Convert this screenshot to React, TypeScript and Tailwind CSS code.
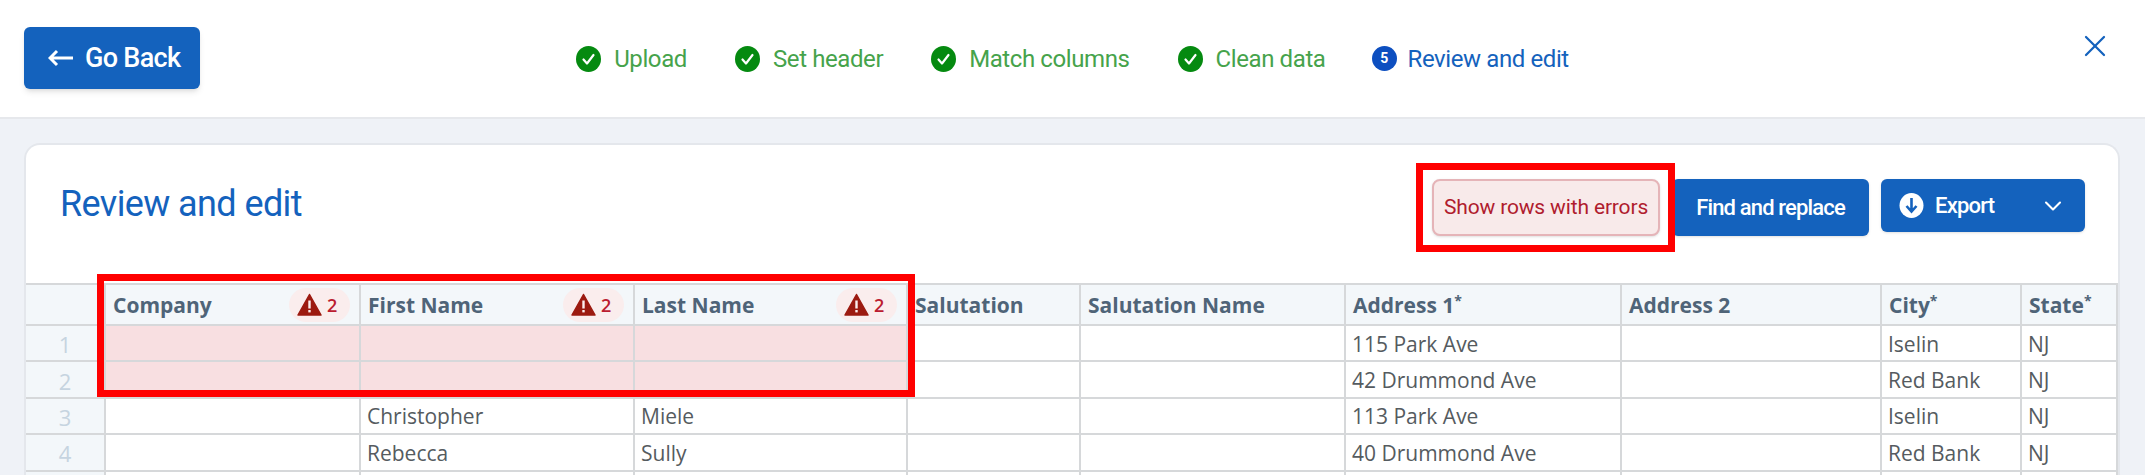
import { X, ChevronDown } from 'lucide-react'

const steps = ['Upload', 'Set header', 'Match columns', 'Clean data']

const columns = [
  { name: 'Company', errors: true, width: 'w-[255px]' },
  { name: 'First Name', errors: true, width: 'w-[274px]' },
  { name: 'Last Name', errors: true, width: 'w-[273px]' },
  { name: 'Salutation', width: 'w-[173px]' },
  { name: 'Salutation Name', width: 'w-[265px]' },
  { name: 'Address 1', required: true, width: 'w-[276px]' },
  { name: 'Address 2', width: 'w-[260px]' },
  { name: 'City', required: true, width: 'w-[140px]' },
  { name: 'State', required: true, width: 'w-[96px]' },
]

const rows = [
  ['', '', '', '', '', '115 Park Ave', '', 'Iselin', 'NJ'],
  ['', '', '', '', '', '42 Drummond Ave', '', 'Red Bank', 'NJ'],
  ['', 'Christopher', 'Miele', '', '', '113 Park Ave', '', 'Iselin', 'NJ'],
  ['', 'Rebecca', 'Sully', '', '', '40 Drummond Ave', '', 'Red Bank', 'NJ'],
  ['', '', '', '', '', '', '', '', ''],
]

const CheckIcon = () => (
  <svg className="h-[26px] w-[25px] shrink-0" viewBox="0 0 25 26">
    <ellipse cx="12.5" cy="13" rx="12.5" ry="13" fill="#058a10" />
    <path d="M7.5 13.5l3.5 4 6.5-8.5" fill="none" stroke="#fff" strokeWidth="2.2" strokeLinecap="round" strokeLinejoin="round" />
  </svg>
)

const ErrorBadge = () => (
  <span className="flex h-[34px] w-[61px] shrink-0 items-center gap-[5px] rounded-full bg-[#faeded] pl-[8px]">
    <svg className="h-[23px] w-[25px]" viewBox="0 0 25 23">
      <path d="M12.5 1.5L24 22H1z" fill="#9c1a10" stroke="#9c1a10" strokeWidth="1.5" strokeLinejoin="round" />
      <rect x="11.3" y="7.5" width="2.4" height="8" fill="#fbeeee" />
      <rect x="11.3" y="17" width="2.4" height="2.4" fill="#fbeeee" />
    </svg>
    <span className="text-[18px] leading-none font-semibold text-[#bb1c30]">2</span>
  </span>
)

export default function App() {
  return (
    <div className="h-[475px] w-[2145px] overflow-hidden bg-[#eff2f7] font-['Roboto',sans-serif]">
      <header className="grid h-[119px] grid-cols-[1fr_auto_1fr] items-center border-b-2 border-[#e6e8ec] bg-white">
        <div className="pb-[2px] pl-6">
          <button type="button" className="flex h-[62px] w-[176px] items-center gap-[12px] rounded-[6px] bg-[#1462bd] pl-[24px] text-[27px] font-medium tracking-[-0.7px] text-white shadow-md">
            <svg className="h-[18px] w-[25px]" viewBox="0 0 25 18">
              <path d="M9 2L2 9l7 7M2 9h23" fill="none" stroke="#fff" strokeWidth="3" />
            </svg>
            <span className="pt-[2px]">Go Back</span>
          </button>
        </div>
        <ol className="flex items-center gap-[48px]">
          {steps.map((step) => (
            <li key={step} className="flex items-center gap-[13px] text-[24px] tracking-[-0.4px] text-[#46a34b]">
              <CheckIcon />
              {step}
            </li>
          ))}
          <li className="ml-[-2px] flex items-center gap-[11px] text-[24px] tracking-[-0.4px] text-[#1462bd]">
            <span className="flex h-[25px] w-[25px] items-center justify-center rounded-full bg-[#0d4fc0] text-[14px] font-bold text-white">5</span>
            Review and edit
          </li>
        </ol>
        <button type="button" className="mt-[28px] mr-[32px] self-start justify-self-end text-[#1462bd]">
          <X size={36} strokeWidth={1.5} />
        </button>
      </header>

      <main className="pt-[24px] pr-[25px] pl-6">
        <section className="relative rounded-t-[16px] border-x-2 border-t-2 border-[#e4e7ec] bg-white">
          <div className="flex h-[138px] items-start pt-[34px] pr-[33px] pl-[34px]">
            <h1 className="mt-[1px] text-[36px] leading-[48px] tracking-[-0.6px] text-[#1462bd]">Review and edit</h1>
            <div className="ml-auto flex items-start gap-3">
              <button type="button" className="flex h-[57px] w-[228px] items-center justify-center rounded-[8px] border-2 border-[#e5b4b8] bg-[#f8eaea] text-[21px] tracking-[-0.15px] text-[#b01c2e] shadow-sm">
                Show rows with errors
              </button>
              <button type="button" className="flex h-[57px] w-[197px] items-center justify-center rounded-[6px] bg-[#1462bd] text-[22px] font-medium tracking-[-0.85px] text-white shadow-sm">
                Find and replace
              </button>
              <button type="button" className="flex h-[53px] w-[204px] items-center rounded-[6px] bg-[#1462bd] pr-[18px] pl-[18px] text-[22px] font-medium tracking-[-0.8px] text-white shadow-sm">
                <svg className="mr-[11px] h-[25px] w-[25px]" viewBox="0 0 24 25">
                  <ellipse cx="12" cy="12.5" rx="12" ry="12.5" fill="#fff" />
                  <path d="M12 5v13M7 13l5 5.5 5-5.5" fill="none" stroke="#1462bd" strokeWidth="2.6" />
                </svg>
                Export
                <ChevronDown className="ml-auto" size={28} strokeWidth={1.8} />
              </button>
            </div>
          </div>

          <table className="table-fixed border-separate border-spacing-0 font-['Open_Sans',sans-serif]">
            <thead>
              <tr>
                <th className="h-[43px] w-[80px] border-y-2 border-r-2 border-[#d6d8da] bg-[#f3f7fa]" />
                {columns.map((col) => (
                  <th key={col.name} className={`${col.width} h-[43px] border-y-2 border-r-2 border-[#d6d8da] bg-[#f3f7fa] pr-[9px] pl-[7px] text-left text-[21px] font-bold text-[#4f6478]`}>
                    <div className="flex items-center justify-between">
                      <span className="pt-[2px]">
                        {col.name}
                        {col.required && <sup className="text-[14px]">*</sup>}
                      </span>
                      {col.errors && <ErrorBadge />}
                    </div>
                  </th>
                ))}
              </tr>
            </thead>
            <tbody>
              {rows.map((row, r) => (
                <tr key={r}>
                  <td className="h-[36.4px] border-r-2 border-b-2 border-[#d6d8da] bg-[#f3f7fa] pt-[2px] text-center text-[22px] leading-none text-[#c6d4e0]">
                    {r < 4 ? r + 1 : ''}
                  </td>
                  {row.map((cell, c) => (
                    <td key={c} className={`h-[36.4px] border-r-2 border-b-2 border-[#d6d8da] pt-[2px] pl-[6px] text-[21px] leading-none text-[#555b60] ${r < 2 && c < 3 ? 'bg-[#f8dfe1]' : 'bg-white'}`}>
                      {cell}
                    </td>
                  ))}
                </tr>
              ))}
            </tbody>
          </table>

          {/* red annotation boxes drawn over the screenshot */}
          <div className="pointer-events-none absolute top-[18px] left-[1390px] h-[89px] w-[259px] border-7 border-[#ff0000]" />
          <div className="pointer-events-none absolute top-[129px] left-[71px] h-[123px] w-[818px] border-7 border-[#ff0000]" />
        </section>
      </main>
    </div>
  )
}
